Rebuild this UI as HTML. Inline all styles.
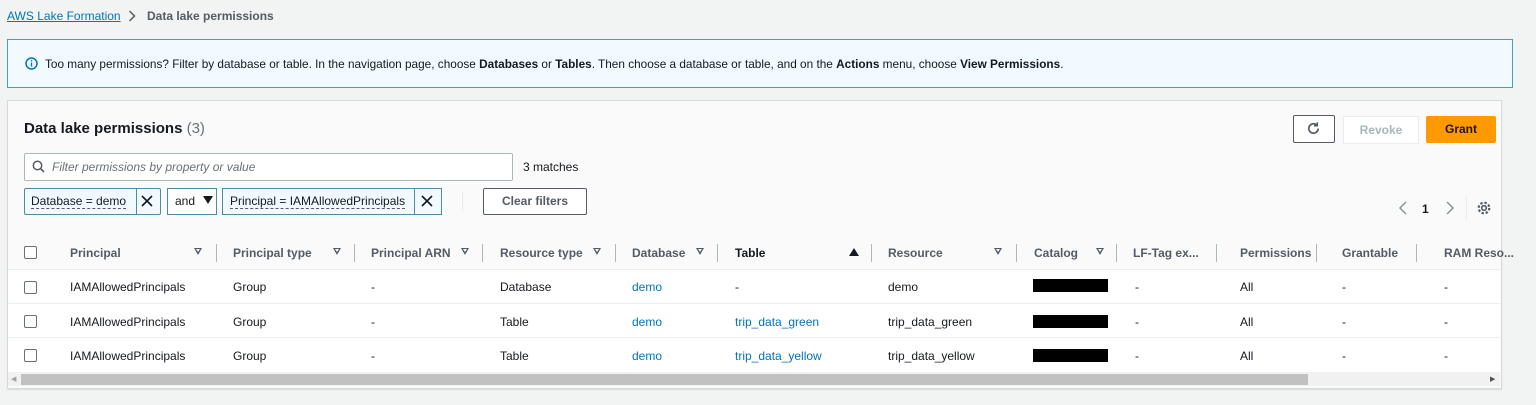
<!DOCTYPE html>
<html><head><style>
body{margin:0;width:1536px;height:405px;background:#f2f3f3;font-family:"Liberation Sans",sans-serif;font-size:12px;color:#16191f;position:relative;overflow:hidden}
.a{position:absolute;white-space:nowrap}
.link{color:#0073bb}
.hd{font-weight:bold;color:#545b64}
.sep{position:absolute;width:1px;height:18px;background:#aab7b8;top:244px}
.tri{position:absolute;top:248px;width:0;height:0;border-left:4px solid transparent;border-right:4px solid transparent;border-top:7px solid #545b64}
.tri:after{content:"";position:absolute;left:-2px;top:-6px;border-left:2px solid transparent;border-right:2px solid transparent;border-top:3px solid #fafafa}
.cb{position:absolute;left:24px;width:11px;height:11px;border:1px solid #687078;border-radius:2px;background:#fff}
.row{position:absolute;left:8px;width:1492px;height:34px;background:#fff;border-top:1px solid #eaeded}
.blk{position:absolute;left:1033px;width:75px;height:13px;background:#000}
</style></head><body>
<div class="a link" style="left:7px;top:9px;font-size:12px;text-decoration:underline">AWS Lake Formation</div>
<svg class="a" style="left:128px;top:10px" width="8" height="12" viewBox="0 0 8 12"><path d="M1.5 1l5 5-5 5" fill="none" stroke="#545b64" stroke-width="1.5"/></svg>
<div class="a" style="left:147px;top:9px;font-weight:bold;color:#545b64">Data lake permissions</div>

<div class="a" style="left:7px;top:39px;width:1504px;height:47px;background:#f1faff;border:1px solid #44a0b8"></div>
<svg class="a" style="left:25px;top:57px" width="13" height="13" viewBox="0 0 13 13"><circle cx="6.5" cy="6.5" r="5.5" fill="none" stroke="#0073bb" stroke-width="1.5"/><rect x="5.8" y="5.5" width="1.4" height="4" fill="#0073bb"/><rect x="5.8" y="3" width="1.4" height="1.4" fill="#0073bb"/></svg>
<div class="a" style="left:45px;top:57px;font-size:11.8px">Too many permissions? Filter by database or table. In the navigation page, choose <b>Databases</b> or <b>Tables</b>. Then choose a database or table, and on the <b>Actions</b> menu, choose <b>View Permissions</b>.</div>

<div class="a" style="left:7px;top:100px;width:1493px;height:287px;background:#fafafa;border:1px solid #d5dbdb;box-shadow:0 1px 1px rgba(0,0,0,.1)"></div>
<div class="a" style="left:24px;top:120px;font-size:15px;font-weight:bold">Data lake permissions <span style="font-weight:normal;color:#687078">(3)</span></div>

<div class="a" style="left:1293px;top:115px;width:40px;height:26px;border:1px solid #545b64;border-radius:2px;background:#fff"></div>
<svg class="a" style="left:1306px;top:121px" width="15" height="15" viewBox="0 0 16 16"><path d="M13 8a5 5 0 1 1-1.5-3.6" fill="none" stroke="#545b64" stroke-width="1.8"/><path d="M12 1.5v3.5h-3.5" fill="none" stroke="#545b64" stroke-width="1.8"/></svg>
<div class="a" style="left:1343px;top:116px;width:74px;height:26px;border:1px solid #eaeded;background:#fff;color:#aab7b8;font-weight:bold;text-align:center;line-height:26px">Revoke</div>
<div class="a" style="left:1426px;top:116px;width:70px;height:27px;background:#ff9900;color:#16191f;font-weight:bold;text-align:center;line-height:27px;border-radius:2px">Grant</div>

<div class="a" style="left:24px;top:153px;width:487px;height:26px;border:1px solid #aab7b8;border-radius:2px;background:#fff"></div>
<svg class="a" style="left:32px;top:160px" width="13" height="13" viewBox="0 0 13 13"><circle cx="5.5" cy="5.5" r="4.2" fill="none" stroke="#545b64" stroke-width="1.5"/><path d="M8.5 8.5l3.5 3.5" stroke="#545b64" stroke-width="1.6"/></svg>
<div class="a" style="left:52px;top:160px;font-style:italic;color:#687078">Filter permissions by property or value</div>
<div class="a" style="left:523px;top:160px">3 matches</div>

<div class="a" style="left:24px;top:188px;width:135px;height:25px;border:1px solid #4c8ba0;background:#f1faff;border-radius:2px"></div>
<div class="a" style="left:136px;top:188px;width:1px;height:27px;background:#4c8ba0"></div>
<div class="a" style="left:31px;top:194px;border-bottom:1px dashed #545b64">Database = demo</div>
<svg class="a" style="left:141px;top:195px" width="12" height="12" viewBox="0 0 12 12"><path d="M1 1l10 10M11 1L1 11" stroke="#16191f" stroke-width="1.6"/></svg>
<div class="a" style="left:167px;top:188px;width:48px;height:25px;border:1px solid #4c8ba0;background:#fff"></div>
<div class="a" style="left:175px;top:194px">and</div>
<div class="a" style="left:203px;top:196px;width:0;height:0;border-left:5px solid transparent;border-right:5px solid transparent;border-top:8px solid #16191f"></div>
<div class="a" style="left:222px;top:188px;width:218px;height:25px;border:1px solid #4c8ba0;background:#f1faff"></div>
<div class="a" style="left:414px;top:188px;width:1px;height:27px;background:#4c8ba0"></div>
<div class="a" style="left:230px;top:194px;border-bottom:1px dashed #545b64">Principal = IAMAllowedPrincipals</div>
<svg class="a" style="left:421px;top:195px" width="12" height="12" viewBox="0 0 12 12"><path d="M1 1l10 10M11 1L1 11" stroke="#16191f" stroke-width="1.6"/></svg>
<div class="a" style="left:462px;top:191px;width:1px;height:20px;background:#eaeded"></div>
<div class="a" style="left:483px;top:188px;width:102px;height:25px;border:1px solid #545b64;border-radius:2px;background:#fff;text-align:center;line-height:25px;font-weight:bold;color:#545b64">Clear filters</div>

<svg class="a" style="left:1398px;top:201px" width="10" height="14" viewBox="0 0 10 14"><path d="M8 1L2 7l6 6" fill="none" stroke="#879596" stroke-width="1.5"/></svg>
<div class="a" style="left:1422px;top:202px;font-weight:bold">1</div>
<svg class="a" style="left:1445px;top:201px" width="10" height="14" viewBox="0 0 10 14"><path d="M2 1l6 6-6 6" fill="none" stroke="#879596" stroke-width="1.5"/></svg>
<div class="a" style="left:1466px;top:196px;width:1px;height:24px;background:#eaeded"></div>
<svg class="a" style="left:1476px;top:200px" width="16" height="16" viewBox="0 0 16 16"><circle cx="8" cy="8" r="2.3" fill="none" stroke="#545b64" stroke-width="1.6"/><circle cx="8" cy="8" r="5.3" fill="none" stroke="#545b64" stroke-width="2.2" stroke-dasharray="2.4 1.8"/></svg>

<div class="cb" style="top:246px"></div>
<div class="a hd" style="left:70px;top:246px">Principal</div><div class="tri" style="left:194px"></div><div class="sep" style="left:216px"></div>
<div class="a hd" style="left:233px;top:246px">Principal type</div><div class="tri" style="left:333px"></div><div class="sep" style="left:354px"></div>
<div class="a hd" style="left:371px;top:246px">Principal ARN</div><div class="tri" style="left:461px"></div><div class="sep" style="left:482px"></div>
<div class="a hd" style="left:500px;top:246px">Resource type</div><div class="tri" style="left:593px"></div><div class="sep" style="left:615px"></div>
<div class="a hd" style="left:632px;top:246px">Database</div><div class="tri" style="left:696px"></div><div class="sep" style="left:717px"></div>
<div class="a" style="left:735px;top:246px;font-weight:bold">Table</div><div class="a" style="left:849px;top:248px;width:0;height:0;border-left:5px solid transparent;border-right:5px solid transparent;border-bottom:8px solid #16191f"></div><div class="sep" style="left:871px"></div>
<div class="a hd" style="left:888px;top:246px">Resource</div><div class="tri" style="left:994px"></div><div class="sep" style="left:1016px"></div>
<div class="a hd" style="left:1034px;top:246px">Catalog</div><div class="tri" style="left:1096px"></div><div class="sep" style="left:1116px"></div>
<div class="a hd" style="left:1133px;top:246px">LF-Tag ex...</div><div class="sep" style="left:1216px"></div>
<div class="a hd" style="left:1240px;top:246px">Permissions</div><div class="sep" style="left:1316px"></div>
<div class="a hd" style="left:1342px;top:246px">Grantable</div><div class="sep" style="left:1416px"></div>
<div class="a hd" style="left:1444px;top:246px">RAM Reso...</div>

<div class="row" style="top:269px"></div>
<div class="row" style="top:303px"></div>
<div class="row" style="top:337px"></div>

<div class="cb" style="top:281px"></div>
<div class="a" style="left:70px;top:280px">IAMAllowedPrincipals</div><div class="a" style="left:233px;top:280px">Group</div><div class="a" style="left:371px;top:280px">-</div><div class="a" style="left:500px;top:280px">Database</div><div class="a link" style="left:632px;top:280px">demo</div><div class="a" style="left:735px;top:280px">-</div><div class="a" style="left:888px;top:280px">demo</div><div class="blk" style="top:279px"></div><div class="a" style="left:1135px;top:280px">-</div><div class="a" style="left:1240px;top:280px">All</div><div class="a" style="left:1342px;top:280px">-</div><div class="a" style="left:1444px;top:280px">-</div>

<div class="cb" style="top:315px"></div>
<div class="a" style="left:70px;top:315px">IAMAllowedPrincipals</div><div class="a" style="left:233px;top:315px">Group</div><div class="a" style="left:371px;top:315px">-</div><div class="a" style="left:500px;top:315px">Table</div><div class="a link" style="left:632px;top:315px">demo</div><div class="a link" style="left:735px;top:315px">trip_data_green</div><div class="a" style="left:888px;top:315px">trip_data_green</div><div class="blk" style="top:315px"></div><div class="a" style="left:1135px;top:315px">-</div><div class="a" style="left:1240px;top:315px">All</div><div class="a" style="left:1342px;top:315px">-</div><div class="a" style="left:1444px;top:315px">-</div>

<div class="cb" style="top:349px"></div>
<div class="a" style="left:70px;top:349px">IAMAllowedPrincipals</div><div class="a" style="left:233px;top:349px">Group</div><div class="a" style="left:371px;top:349px">-</div><div class="a" style="left:500px;top:349px">Table</div><div class="a link" style="left:632px;top:349px">demo</div><div class="a link" style="left:735px;top:349px">trip_data_yellow</div><div class="a" style="left:888px;top:349px">trip_data_yellow</div><div class="blk" style="top:349px"></div><div class="a" style="left:1135px;top:349px">-</div><div class="a" style="left:1240px;top:349px">All</div><div class="a" style="left:1342px;top:349px">-</div><div class="a" style="left:1444px;top:349px">-</div>

<div class="a" style="left:8px;top:372px;width:1492px;height:14px;background:#f1f1f1"></div>
<div class="a" style="left:21px;top:374px;width:1287px;height:11px;background:#c1c1c1"></div>
<div class="a" style="left:11px;top:375px;font-size:7px;color:#a0a0a0">&#9664;</div>
<div class="a" style="left:1490px;top:375px;font-size:7px;color:#505050">&#9654;</div>
</body></html>
